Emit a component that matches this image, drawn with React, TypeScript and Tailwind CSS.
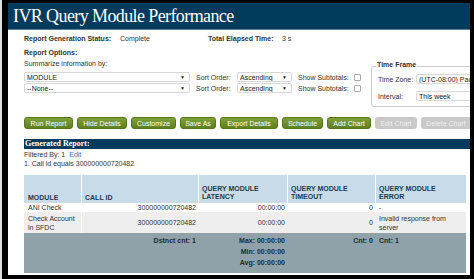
import React from "react";

const sans = { fontFamily: '"Liberation Sans", Arial, sans-serif' };
const serif = { fontFamily: '"Liberation Serif", "Times New Roman", serif' };

function Sel({ w, children }: { w: string; children: React.ReactNode }) {
  return (
    <div className={`${w} h-[10px] border border-[#d8d8d8] rounded-[2px] bg-white flex items-center justify-between px-[2px] text-[7px] text-[#222] leading-none shrink-0 whitespace-nowrap overflow-hidden`}>
      <span>{children}</span>
      <span className="text-[5px] pr-[2px]">▼</span>
    </div>
  );
}

function Btn({ children, w, disabled }: { children: React.ReactNode; w: string; disabled?: boolean }) {
  return (
    <div
      className={`${w} h-[12px] rounded-[3px] flex items-center justify-center text-[7px] leading-none shrink-0 whitespace-nowrap ${
        disabled
          ? "bg-[#c9c9c9] text-[#eeeeee]"
          : "bg-gradient-to-b from-[#7fa038] to-[#5f8020] text-white border border-[#56761a]"
      }`}
    >
      {children}
    </div>
  );
}

function Check() {
  return <div className="w-[7px] h-[7px] border border-[#aaa] bg-white rounded-[1px] shrink-0" />;
}

const cols = "grid grid-cols-[58px_117px_89px_88px_90px]";

export default function App() {
  return (
    <div className="w-[474px] h-[279px] bg-black overflow-hidden flex" style={sans}>
      <div className="w-[2px] h-full bg-[#ddd]" />
      <div className="flex-1 pt-[3px] pl-[6px] pr-[4px] pb-[4px] flex min-w-0">
        <div className="flex-1 bg-white overflow-hidden flex flex-col min-w-0">
          <div className="h-[27px] bg-[#033b5d] flex items-center pl-[5px] text-white text-[18px] tracking-[-0.6px] leading-none border-b border-[#5a7f99] shrink-0 whitespace-nowrap" style={serif}>
            IVR Query Module Performance
          </div>
          <div className="pl-[16px] flex flex-col text-[7px] text-[#333] leading-none w-[600px] whitespace-nowrap">
            <div className="flex items-center h-[10px] mt-[3px]">
              <span className="font-bold w-[96px]">Report Generation Status:</span>
              <span className="w-[88px]">Complete</span>
              <span className="font-bold w-[74px]">Total Elapsed Time:</span>
              <span>3 s</span>
            </div>
            <div className="flex">
              <div className="flex flex-col">
                <div className="font-bold mt-[6px] h-[10px]">Report Options:</div>
                <div className="h-[10px] mt-[1px]">Summarize information by:</div>
                <div className="flex items-center mt-[2px]">
                  <Sel w="w-[166px]">MODULE</Sel>
                  <span className="ml-[6px] w-[41px]">Sort Order:</span>
                  <Sel w="w-[55px]">Ascending</Sel>
                  <span className="ml-[6px] w-[56px]">Show Subtotals:</span>
                  <Check />
                </div>
                <div className="flex items-center mt-[1px]">
                  <Sel w="w-[166px]">--None--</Sel>
                  <span className="ml-[6px] w-[41px]">Sort Order:</span>
                  <Sel w="w-[55px]">Ascending</Sel>
                  <span className="ml-[6px] w-[56px]">Show Subtotals:</span>
                  <Check />
                </div>
              </div>
              <div className="ml-[10px] mt-[23px] relative border border-[#ccc] rounded-[3px] w-[140px] h-[41px] pl-[6px] pt-[7px] flex flex-col gap-[7px]">
                <div className="absolute -top-[6px] left-[4px] bg-white px-[1px] font-bold">Time Frame</div>
                <div className="flex items-center">
                  <span className="w-[38px]">Time Zone:</span>
                  <Sel w="w-[90px]">(UTC-08:00) Pacific</Sel>
                </div>
                <div className="flex items-center">
                  <span className="w-[38px]">Interval:</span>
                  <Sel w="w-[90px]">This week</Sel>
                </div>
              </div>
            </div>
            <div className="flex gap-[4px] mt-[10px]">
              <Btn w="w-[49px]">Run Report</Btn>
              <Btn w="w-[50px]">Hide Details</Btn>
              <Btn w="w-[45px]">Customize</Btn>
              <Btn w="w-[36px]">Save As</Btn>
              <Btn w="w-[58px]">Export Details</Btn>
              <Btn w="w-[41px]">Schedule</Btn>
              <Btn w="w-[44px]">Add Chart</Btn>
              <Btn w="w-[42px]" disabled>Edit Chart</Btn>
              <Btn w="w-[50px]" disabled>Delete Chart</Btn>
            </div>
          </div>
          <div className="ml-[16px] mt-[10px] h-[10px] bg-[#033b5d] text-white font-bold text-[8px] leading-none flex items-center pl-[1px] shrink-0" style={serif}>
            Generated Report:
          </div>
          <div className="pl-[16px] text-[7px] text-[#333] leading-none flex flex-col whitespace-nowrap">
            <div className="mt-[1px] h-[9px] flex items-center">Filtered By: 1 <span className="text-[#3a6fb0] ml-[4px]">Edit</span></div>
            <div className="h-[9px] flex items-center">1. Call id equals 300000000720482</div>
            <div className="w-[442px] mt-[7px] flex flex-col">
              <div className={`${cols} h-[28px] bg-[#c7dce8] text-[#1d3a4e] font-bold`}>
                <div className="border-r border-white flex items-end pb-[2px] pl-[4px]">MODULE</div>
                <div className="border-r border-white flex items-end pb-[2px] pl-[3px]">CALL ID</div>
                <div className="border-r border-white flex items-end pb-[2px] pl-[3px] leading-[8px]">QUERY MODULE<br />LATENCY</div>
                <div className="border-r border-white flex items-end pb-[2px] pl-[3px] leading-[8px]">QUERY MODULE<br />TIMEOUT</div>
                <div className="flex items-end pb-[2px] pl-[3px] leading-[8px]">QUERY MODULE<br />ERROR</div>
              </div>
              <div className={`${cols} h-[9px] items-center`}>
                <div className="pl-[4px]">ANI Check</div>
                <div className="text-right pr-[3px]">300000000720482</div>
                <div className="text-right pr-[3px]">00:00:00</div>
                <div className="text-right pr-[3px]">0</div>
                <div className="pl-[3px]">-</div>
              </div>
              <div className={`${cols} h-[21px] bg-[#eeeeee]`}>
                <div className="pl-[4px] leading-[9px] flex items-center border-r border-white">Check Account<br />in SFDC</div>
                <div className="text-right pr-[3px] flex items-center justify-end">300000000720482</div>
                <div className="text-right pr-[3px] flex items-center justify-end">00:00:00</div>
                <div className="text-right pr-[3px] flex items-center justify-end">0</div>
                <div className="pl-[3px] leading-[9px] flex items-center">Invalid response from<br />server</div>
              </div>
              <div className={`${cols} h-[40px] bg-[#8fa2aa] text-[#1d2b33] font-bold pt-[4px]`}>
                <div />
                <div className="text-right pr-[3px]">Dstnct cnt: 1</div>
                <div className="text-right pr-[3px] flex flex-col gap-[4px]">
                  <span>Max: 00:00:00</span>
                  <span>Min: 00:00:00</span>
                  <span>Avg: 00:00:00</span>
                </div>
                <div className="text-right pr-[3px]">Cnt: 0</div>
                <div className="pl-[3px]">Cnt: 1</div>
              </div>
            </div>
          </div>
        </div>
      </div>
    </div>
  );
}
